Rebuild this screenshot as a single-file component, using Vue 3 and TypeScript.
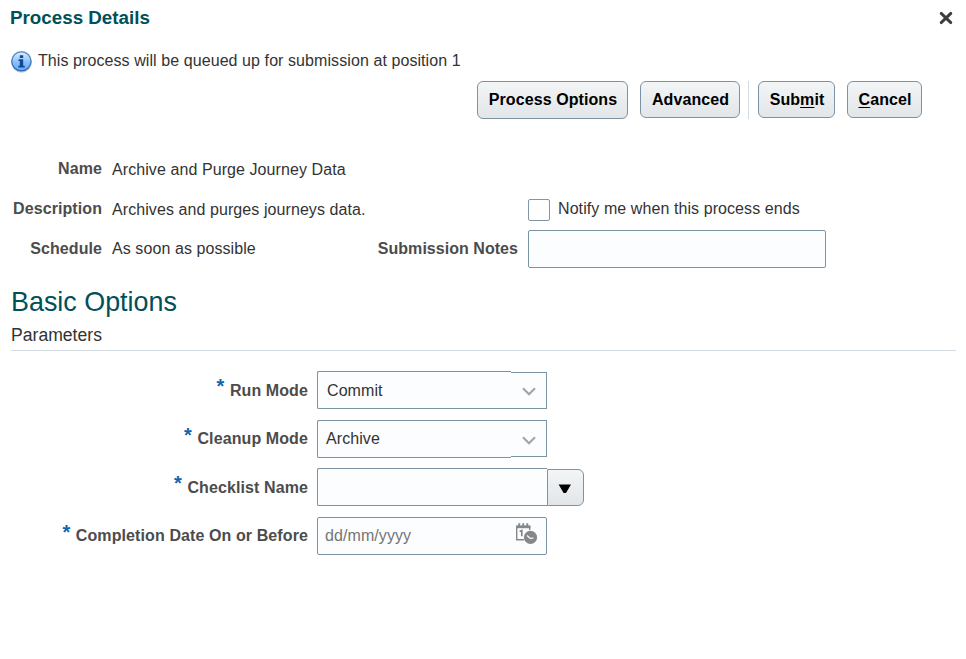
<script setup lang="ts">
import { ref } from 'vue'

interface Detail {
  label: string
  value: string
}

const details: Detail[] = [
  { label: 'Name', value: 'Archive and Purge Journey Data' },
  { label: 'Description', value: 'Archives and purges journeys data.' },
  { label: 'Schedule', value: 'As soon as possible' },
]

const notify = ref(false)
const notes = ref('')
const checklist = ref('')
const completionDate = ref('')
</script>

<template>
  <main class="dialog">
    <header class="titlebar">
      <h1>Process Details</h1>
      <button class="close" aria-label="Close">
        <svg width="14" height="14" viewBox="0 0 14 14">
          <path d="M2.2 2.4 L11.8 11.6 M11.8 2.4 L2.2 11.6" fill="none" stroke="#3c3c3c" stroke-width="2.9" stroke-linecap="round" />
        </svg>
      </button>
    </header>

    <div class="message">
      <svg class="info" width="23" height="23" viewBox="0 0 23 23">
        <defs>
          <linearGradient id="ring" x1="0" y1="0" x2="0" y2="1">
            <stop offset="0" stop-color="#6d96c8" />
            <stop offset="1" stop-color="#2b64b4" />
          </linearGradient>
          <linearGradient id="glass" x1="0" y1="0" x2="0" y2="1">
            <stop offset="0" stop-color="#dcefff" />
            <stop offset="0.5" stop-color="#8cc4fb" />
            <stop offset="1" stop-color="#62adf8" />
          </linearGradient>
        </defs>
        <circle cx="11.5" cy="12.4" r="10.3" fill="#a3a9b5" opacity="0.6" />
        <circle cx="11.4" cy="11.3" r="10.3" fill="url(#ring)" />
        <circle cx="11.4" cy="11.3" r="8.9" fill="url(#glass)" />
        <path d="M9.8 5.2h3.4v2.8H9.8zM8.6 9.3h4.6v6.4h1.5v1.8H8.4v-1.8h1.4v-4.6H8.6z" fill="#164596" />
      </svg>
      <span>This process will be queued up for submission at position 1</span>
    </div>

    <div class="toolbar">
      <button class="btn options">Process Options</button>
      <button class="btn advanced">Advanced</button>
      <i class="divider"></i>
      <button class="btn submit">Sub<u>m</u>it</button>
      <button class="btn cancel"><u>C</u>ancel</button>
    </div>

    <section class="summary">
      <dl class="details">
        <template v-for="d in details" :key="d.label">
          <dt>{{ d.label }}</dt>
          <dd :class="d.label.toLowerCase()">{{ d.value }}</dd>
        </template>
      </dl>
      <div class="extras">
        <label class="notify">
          <input v-model="notify" type="checkbox" />
          <span>Notify me when this process ends</span>
        </label>
        <label class="notes">
          <b>Submission Notes</b>
          <input v-model="notes" type="text" class="field" />
        </label>
      </div>
    </section>

    <h2>Basic Options</h2>
    <h3>Parameters</h3>

    <form class="params" @submit.prevent>
      <div class="row low">
        <span class="label"><i>*</i>Run Mode</span>
        <div class="select upper">
          <span class="value commit">Commit</span>
          <span class="arrow">
            <svg width="16" height="12" viewBox="0 0 16 12"><path d="M2 2.2 L8 8.2 L14 2.2" fill="none" stroke="#a2a4a6" stroke-width="2.1" /></svg>
          </span>
        </div>
      </div>
      <div class="row">
        <span class="label"><i>*</i>Cleanup Mode</span>
        <div class="select lower">
          <span class="value">Archive</span>
          <span class="arrow">
            <svg width="16" height="12" viewBox="0 0 16 12"><path d="M2 2.2 L8 8.2 L14 2.2" fill="none" stroke="#a2a4a6" stroke-width="2.1" /></svg>
          </span>
        </div>
      </div>
      <div class="row low">
        <span class="label"><i>*</i>Checklist Name</span>
        <div class="combo">
          <input v-model="checklist" type="text" class="field" />
          <button class="drop" aria-label="Open list">
            <svg width="14" height="10" viewBox="0 0 14 10"><path d="M0.6 0.6 H13 L8 8.9 H5.6 Z" fill="#000" /></svg>
          </button>
        </div>
      </div>
      <div class="row">
        <span class="label"><i>*</i>Completion Date On or Before</span>
        <div class="date">
          <input v-model="completionDate" type="text" placeholder="dd/mm/yyyy" />
          <svg width="23" height="23" viewBox="0 0 23 23">
            <path d="M1.7 3 V16.8 H9 M14.7 7 V3" fill="none" stroke="#85888b" stroke-width="1.4" />
            <path d="M1 2.4 H15.4 V5.2 H1 Z" fill="#85888b" />
            <path d="M4.2 0.2 V4.4 M8.2 0.2 V4.4 M12.3 0.2 V4.4" stroke="#85888b" stroke-width="1.9" />
            <path d="M4.6 8.5 L6.8 7.6 V13.2" fill="none" stroke="#85888b" stroke-width="1.7" />
            <circle cx="15.5" cy="14.4" r="6.6" fill="#85888b" />
            <path d="M12 12.5 L15.3 15.4 L18.5 15" fill="none" stroke="#fff" stroke-width="1.2" />
          </svg>
        </div>
      </div>
    </form>
  </main>
</template>

<style>
body {
  margin: 0;
  background: #fff;
}
</style>

<style scoped>
* {
  box-sizing: border-box;
}
.dialog {
  width: 966px;
  height: 659px;
  overflow: hidden;
  font: 16px/20px "Liberation Sans", Arial, sans-serif;
  letter-spacing: 0.08px;
  color: #333;
}
button,
input {
  font: inherit;
  letter-spacing: inherit;
  margin: 0;
  padding: 0;
}
.titlebar {
  display: flex;
  justify-content: space-between;
  height: 50px;
  padding: 8px 13px 0 10px;
}
h1 {
  margin: 0;
  font-size: 18.8px;
  line-height: 20px;
  letter-spacing: 0;
  color: #00505a;
}
.close {
  display: block;
  width: 14px;
  height: 14px;
  margin-top: 3px;
  border: 0;
  background: none;
}
.close svg,
.info {
  display: block;
}
.message {
  display: flex;
  height: 31px;
  padding-left: 10px;
  gap: 5px;
}
.message span {
  padding-top: 1px;
}
.toolbar {
  display: flex;
  align-items: flex-start;
  height: 68px;
  padding-left: 477px;
}
.btn {
  height: 37px;
  padding-left: 1px;
  border: 1px solid #7a93a6;
  border-radius: 6px;
  background: linear-gradient(#f3f5f6, #e2e6e9);
  color: #000;
  font-weight: bold;
}
.btn u {
  text-decoration-thickness: 1px;
  text-underline-offset: 2px;
}
.options {
  width: 151px;
  height: 38px;
  margin-right: 12px;
}
.advanced {
  width: 100px;
}
.divider {
  width: 1px;
  height: 38px;
  margin: 0 9px 0 8px;
  background: #d0dbe4;
}
.submit {
  width: 77px;
  margin-right: 12px;
}
.cancel {
  width: 75px;
}
.summary {
  display: flex;
  height: 137px;
}
.details {
  display: grid;
  grid-template-columns: 102px 268px;
  grid-template-rows: 40px 40px 40px;
  column-gap: 10px;
  margin: 0;
  padding-top: 10px;
}
dt {
  text-align: right;
  font-weight: bold;
  color: #4c4c4c;
}
dd {
  margin: 1px 0 0;
}
dd.schedule {
  margin-top: 0;
}
.extras {
  padding-top: 50px;
  margin-left: -12px;
}
.notify {
  display: flex;
  align-items: flex-start;
  gap: 8px;
  padding-left: 160px;
  height: 31px;
}
.notify input {
  appearance: none;
  width: 22px;
  height: 22px;
  border: 1px solid #8296a6;
  border-radius: 2px;
  background: #fff;
}
.notes {
  display: flex;
  gap: 10px;
}
.notes b {
  width: 150px;
  padding-top: 9px;
  text-align: right;
  letter-spacing: 0.04px;
  color: #4c4c4c;
}
.field {
  border: 1px solid #7a93a2;
  border-radius: 2px;
  background: #fcfdfe;
  outline: 0;
}
.notes .field {
  width: 298px;
  height: 38px;
}
h2 {
  margin: 0;
  padding-left: 11px;
  height: 38px;
  font-size: 26.9px;
  line-height: 32px;
  letter-spacing: 0;
  font-weight: normal;
  color: #00505a;
}
h3 {
  margin: 0 10px 0 11px;
  height: 27px;
  border-bottom: 1px solid #d3dce3;
  font-size: 17.6px;
  line-height: 23px;
  letter-spacing: 0;
  font-weight: normal;
}
.params {
  display: grid;
  grid-template-rows: 49px 48px 49px 38px;
  padding-top: 20px;
}
.row {
  display: flex;
  gap: 9px;
}
.label {
  width: 308px;
  padding-top: 9px;
  text-align: right;
  font-weight: bold;
  letter-spacing: 0.1px;
  color: #4c4c4c;
}
.low .label {
  padding-top: 10px;
}
.label i {
  position: relative;
  top: -2px;
  margin-right: 5.5px;
  font-size: 20px;
  line-height: 16px;
  font-style: normal;
  color: #1264ad;
}
.low .label i {
  top: -3px;
}
.select {
  display: flex;
  width: 230px;
  height: 38px;
}
.value {
  width: 194px;
  padding: 8px 0 0 8px;
  border: 1px solid #7a93a2;
  border-right: 0;
  border-radius: 2px 0 0 2px;
  background: #fcfdfe;
}
.value.commit {
  padding: 9px 0 0 9px;
}
.arrow {
  display: flex;
  width: 36px;
  height: 37px;
  padding: 14px 0 0 10px;
  border: 1px solid #7a93a2;
  border-left: 0;
  background: #fcfdfe;
}
.upper .arrow {
  margin-top: 1px;
  padding-top: 13px;
}
.combo {
  display: flex;
}
.combo .field {
  width: 230px;
  height: 38px;
  border-right: 0;
  border-radius: 2px 0 0 2px;
}
.drop {
  display: flex;
  width: 37px;
  height: 37px;
  margin-top: 1px;
  padding: 14px 0 0 10px;
  border: 1px solid #7a93a6;
  border-radius: 0 6px 6px 0;
  background: linear-gradient(#f3f5f6, #e2e6e9);
}
.date {
  display: flex;
  width: 230px;
  height: 38px;
  border: 1px solid #7a93a2;
  border-radius: 2px;
  background: #fcfdfe;
}
.date input {
  width: 197px;
  padding-left: 7px;
  border: 0;
  background: none;
  outline: 0;
}
.date input::placeholder {
  color: #757575;
}
.date svg {
  margin-top: 5px;
}
</style>
